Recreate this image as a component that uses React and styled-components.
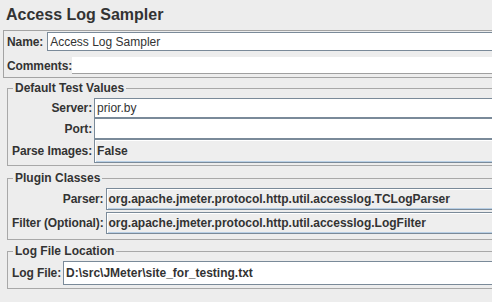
import React from 'react';
import styled, { createGlobalStyle } from 'styled-components';

const GlobalStyle = createGlobalStyle`
  html, body {
    margin: 0;
    padding: 0;
    background: #ededed;
    overflow: hidden;
  }
  body {
    font-family: 'Liberation Sans', Arial, sans-serif;
    color: #333333;
  }
`;

const Page = styled.div`
  width: 492px;
  height: 302px;
  background: #ededed;
  overflow: hidden;
`;

const Title = styled.div`
  height: 30px;
  line-height: 30px;
  padding-left: 6px;
  font-size: 16px;
  font-weight: bold;
  color: #333333;
`;

/* panels run past the right edge in the screenshot, so no right border */
const NamePanel = styled.div`
  margin-left: 3px;
  border: 1px solid #a3a3a3;
  border-right: none;
  padding: 1px 0 3px 3px;
`;

const Row = styled.div`
  display: flex;
  align-items: center;
  margin-top: ${p => p.$top || 0}px;
`;

const Label = styled.span`
  font-size: 12px;
  font-weight: bold;
  letter-spacing: -0.1px;
  white-space: nowrap;
  text-align: right;
  align-self: center;
`;

const TextField = styled.div`
  box-sizing: border-box;
  flex: 1;
  min-width: 0;
  height: ${p => p.$h}px;
  margin-left: ${p => p.$gap || 0}px;
  background: #ffffff;
  border: 1px solid #7a8a99;
  border-right: none;
  padding: 0 2px;
  display: flex;
  align-items: center;
  font-size: 12px;
  font-weight: ${p => (p.$bold ? 'bold' : 'normal')};
  white-space: nowrap;
  overflow: hidden;
`;

const CommentsArea = styled.div`
  box-sizing: border-box;
  flex: 1;
  height: 17px;
  background: #ffffff;
  border-bottom: 1px solid #a0a0a0;
`;

const Group = styled.fieldset`
  margin: ${p => p.$top}px 0 0 7px;
  border: 1px solid #a8a8a8;
  border-right: none;
  padding: 3px 0 ${p => p.$bottom}px 4px;
  min-width: 0;
`;

const Legend = styled.legend`
  margin-left: 1px;
  padding: 0 2px;
  font-size: 12px;
  line-height: 14px;
  font-weight: bold;
  color: #333333;
`;

const FieldGrid = styled.div`
  display: grid;
  grid-template-columns: auto 1fr;
  column-gap: 2px;
  row-gap: ${p => p.$gap || 0}px;
`;

const Combo = styled.div`
  box-sizing: border-box;
  min-width: 0;
  height: ${p => p.$h}px;
  background: #eeeeee;
  border: 1px solid #7a8a99;
  border-right: none;
  box-shadow: inset 1px 1px 0 #ffffff, inset 0 -1px 0 #b8cfe5;
  padding: 0 2px;
  display: flex;
  align-items: center;
  font-size: 12px;
  font-weight: bold;
  white-space: nowrap;
  overflow: hidden;
`;

export default function App() {
  return (
    <Page>
      <GlobalStyle />
      <Title>Access Log Sampler</Title>

      <NamePanel>
        <Row>
          <Label>Name:</Label>
          <TextField $h={19} $gap={4}>Access Log Sampler</TextField>
        </Row>
        <Row $top={6}>
          <Label>Comments:</Label>
          <CommentsArea />
        </Row>
      </NamePanel>

      <Group $top={3} $bottom={2}>
        <Legend>Default Test Values</Legend>
        <FieldGrid>
          <Label>Server:</Label>
          <TextField $h={20}>prior.by</TextField>
          <Label>Port:</Label>
          <TextField $h={21} />
          <Label>Parse Images:</Label>
          <Combo $h={24}>False</Combo>
        </FieldGrid>
      </Group>

      <Group $top={5} $bottom={5}>
        <Legend>Plugin Classes</Legend>
        <FieldGrid $gap={2}>
          <Label>Parser:</Label>
          <Combo $h={22}>org.apache.jmeter.protocol.http.util.accesslog.TCLogParser</Combo>
          <Label>Filter (Optional):</Label>
          <Combo $h={22}>org.apache.jmeter.protocol.http.util.accesslog.LogFilter</Combo>
        </FieldGrid>
      </Group>

      <Group $top={4} $bottom={3}>
        <Legend>Log File Location</Legend>
        <FieldGrid>
          <Label>Log File:</Label>
          <TextField $h={24} $bold>D:\src\JMeter\site_for_testing.txt</TextField>
        </FieldGrid>
      </Group>
    </Page>
  );
}
